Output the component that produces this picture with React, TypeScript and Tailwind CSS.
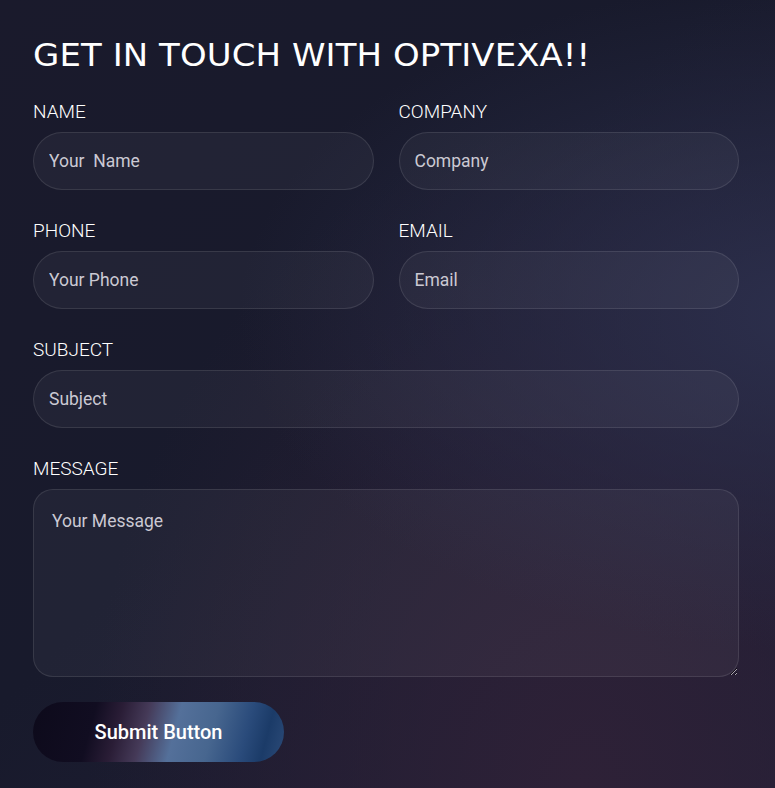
import React from "react";

const fieldClass =
  "h-[58px] w-full rounded-full border border-white/10 bg-white/[0.045] px-[15px] text-[17.5px] text-[#d0cfd8] placeholder:text-[#cbc9d3] outline-none";

function Field({
  label,
  placeholder,
}: {
  label: string;
  placeholder: string;
}) {
  return (
    <label className="flex flex-col">
      <span className="mb-[10px] text-[19px] font-light leading-[21px] text-white">
        {label}
      </span>
      <input type="text" placeholder={placeholder} className={fieldClass} />
    </label>
  );
}

export default function App() {
  return (
    <div
      className="min-h-[788px] w-full bg-[radial-gradient(ellipse_at_105%_40%,#2c2f4c_0%,transparent_50%),radial-gradient(ellipse_at_75%_100%,#2e2137_0%,transparent_60%),linear-gradient(135deg,#1a1a2c_0%,#181a2c_45%,#211f37_100%)] px-[33px] pt-[36px] pb-[26px]"
      style={{ fontFamily: "Roboto, 'Noto Sans', sans-serif" }}
    >
      <h1
        className="mb-[27px] text-[32px] leading-[38px] text-white"
        style={{ fontFamily: "'DejaVu Sans', sans-serif" }}
      >
        <span className="inline-block origin-left scale-x-[1.06] tracking-[0.1px]">
          GET IN TOUCH WITH OPTIVEXA!!
        </span>
      </h1>

      <form className="flex w-[706px] flex-col gap-y-[30px]">
        <div className="grid grid-cols-2 gap-x-[25px]">
          <Field label="NAME" placeholder="Your  Name" />
          <Field label="COMPANY" placeholder="Company" />
        </div>
        <div className="grid grid-cols-2 gap-x-[25px]">
          <Field label="PHONE" placeholder="Your Phone" />
          <Field label="EMAIL" placeholder="Email" />
        </div>
        <Field label="SUBJECT" placeholder="Subject" />
        <label className="flex flex-col">
          <span className="mb-[10px] text-[19px] font-light leading-[21px] text-white">
            MESSAGE
          </span>
          <textarea
            placeholder="Your Message"
            className="h-[188px] w-full rounded-[20px] border border-white/10 bg-white/[0.045] px-[18px] py-[20px] text-[17.5px] leading-[22px] text-[#d0cfd8] placeholder:text-[#cbc9d3] outline-none"
          />
        </label>
        <button
          type="button"
          className="-mt-[5px] h-[60px] w-[251px] rounded-full bg-[linear-gradient(105deg,#0d0a1b_0%,#110d21_24%,#2a1d36_34%,#453a58_44%,#54709a_56%,#47668f_70%,#2a4b7b_83%,#1b3b68_91%,#2c4b78_100%)] text-[20px] font-medium text-white"
        >
          Submit Button
        </button>
      </form>
    </div>
  );
}
